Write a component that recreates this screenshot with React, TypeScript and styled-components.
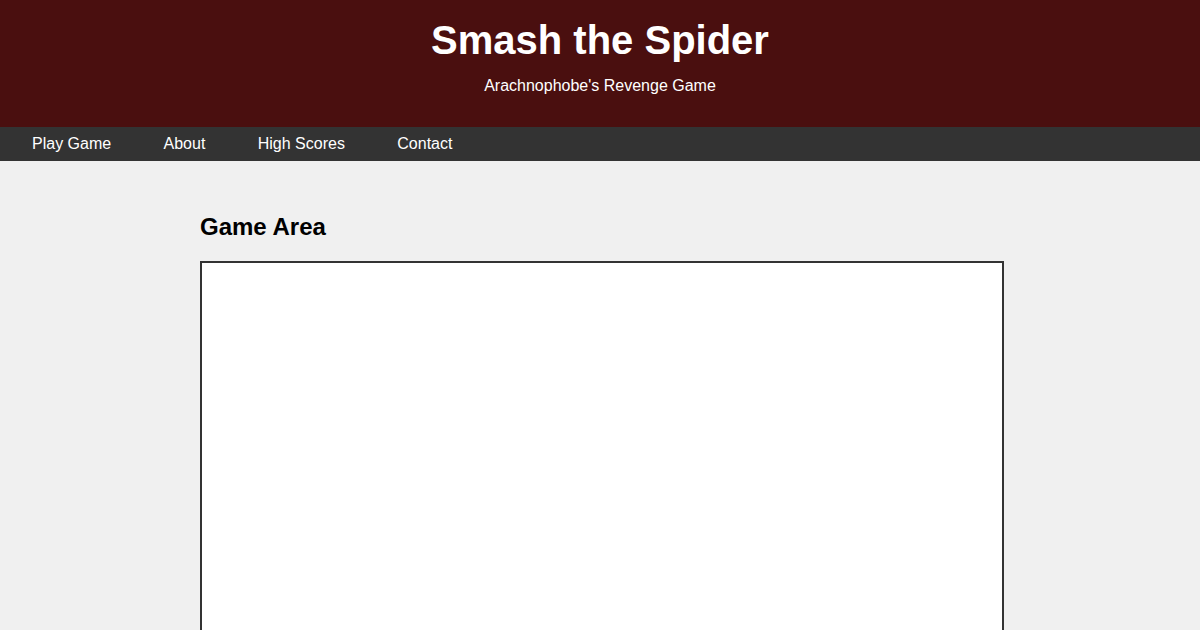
import styled, { createGlobalStyle } from 'styled-components'

const GlobalStyle = createGlobalStyle`
  html, body {
    margin: 0;
    padding: 0;
    background: #f0f0f0;
    font-family: "Liberation Sans", Arial, sans-serif;
  }
`

const Header = styled.header`
  background: #4a0f0f;
  color: #fff;
  text-align: center;
  padding: 17px 16px 16px;
`

const Title = styled.h1`
  margin: 0;
  font-size: 40px;
  line-height: 46px;
  font-weight: bold;
`

const Tagline = styled.p`
  margin: 14px 0 16px;
  font-size: 16px;
  line-height: 18px;
`

const NavBar = styled.nav`
  background: #333;
  display: flex;
  gap: 52.4px;
  padding: 0 32px;
`

const NavLink = styled.a`
  color: #fff;
  text-decoration: none;
  font-size: 16px;
  line-height: 18px;
  padding: 8px 0;
  cursor: pointer;
`

const Main = styled.main`
  max-width: 800px;
  margin: 0 auto;
  padding: 32px 0;
`

const SectionTitle = styled.h2`
  margin: 20px 0;
  font-size: 24px;
  line-height: 28px;
  font-weight: bold;
  color: #000;
`

const GameBoard = styled.div`
  width: 800px;
  height: 600px;
  background: #fff;
  border: 2px solid #333;
`

const links = ['Play Game', 'About', 'High Scores', 'Contact']

export default function App() {
  return (
    <>
      <GlobalStyle />
      <Header>
        <Title>Smash the Spider</Title>
        <Tagline>Arachnophobe's Revenge Game</Tagline>
      </Header>
      <NavBar>
        {links.map((l) => (
          <NavLink key={l}>{l}</NavLink>
        ))}
      </NavBar>
      <Main>
        <SectionTitle>Game Area</SectionTitle>
        <GameBoard />
      </Main>
    </>
  )
}
